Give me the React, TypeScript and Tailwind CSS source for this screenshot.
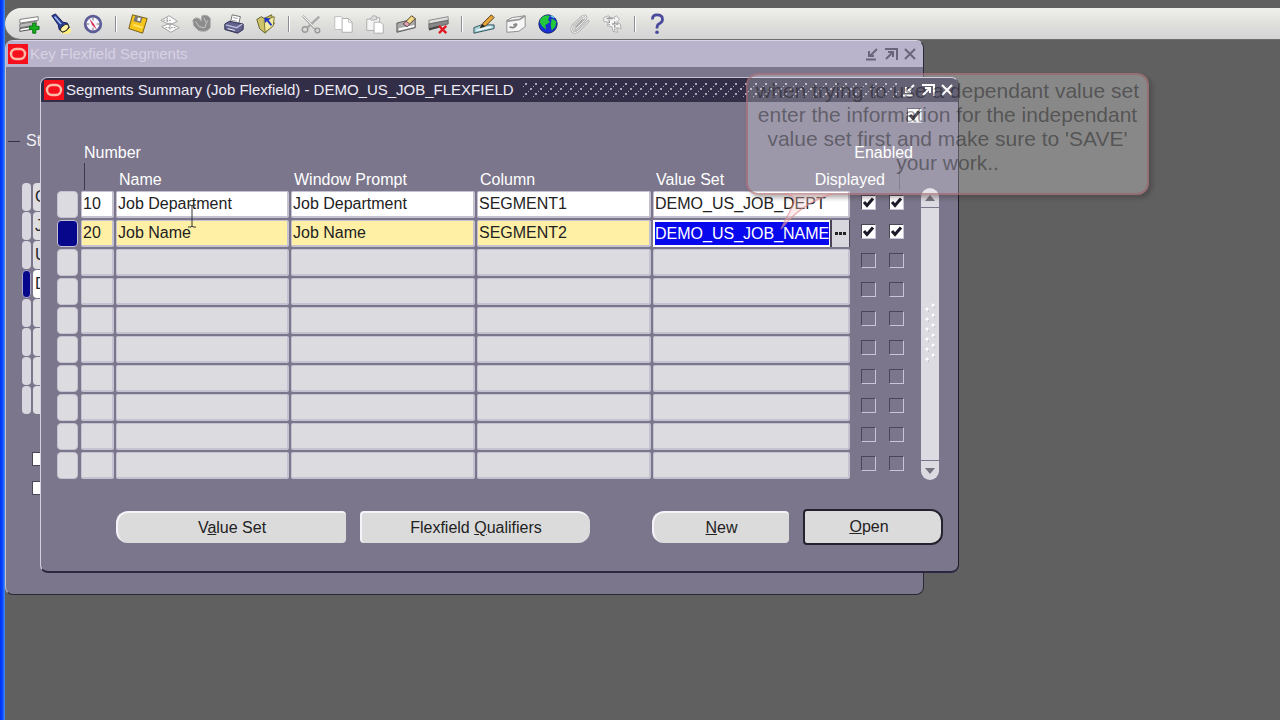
import React, { useState } from 'react';

interface Segment {
  number: string;
  name: string;
  prompt: string;
  column: string;
  valueSet: string;
  displayed: boolean;
  enabled: boolean;
}

const emptySegment: Segment = {
  number: '', name: '', prompt: '', column: '', valueSet: '', displayed: false, enabled: false
};

const initialSegments: Segment[] = [
  { number: '10', name: 'Job Department', prompt: 'Job Department', column: 'SEGMENT1', valueSet: 'DEMO_US_JOB_DEPT', displayed: true, enabled: true },
  { number: '20', name: 'Job Name', prompt: 'Job Name', column: 'SEGMENT2', valueSet: 'DEMO_US_JOB_NAME', displayed: true, enabled: true },
  ...Array.from({ length: 8 }, () => ({ ...emptySegment }))
];

const structures = ['C', 'J', 'U', 'D', '', '', '', ''];

// toolbar drawings, all on a 24 x 24 grid
const icons: Record<string, React.ReactNode> = {
  New: (
    <>
      <path d="M2 7 L22 4 V8 L2 11Z" fill="#fff" stroke="#777" />
      <path d="M2 12 L20 9 V13 L2 16Z" fill="#bbb" stroke="#777" />
      <path d="M2 17 L14 15 V18 L2 20Z" fill="#fff" stroke="#444" />
      <path d="M16 11 h3.5 v3.5 H23 v3.5 h-3.5 V22 H16 v-4 h-3.500 v-3.500 H16Z" fill="#16b01c" stroke="#087010" />
    </>
  ),
  Find: (
    <>
      <ellipse cx="17" cy="19" rx="6" ry="4" fill="#fff07a" />
      <path d="M2 3 L6 1 L14 10 L19 11 L21 16 L14 21 L10 18 L9 13Z" fill="#2a3f96" stroke="#101a50" />
      <path d="M5 4 L12 12" stroke="#9ab4f0" strokeWidth="2" />
      <ellipse cx="16" cy="16.500" rx="5" ry="3" transform="rotate(-38 16 16.500)" fill="#fff2a0" stroke="#222" />
    </>
  ),
  'Show Navigator': (
    <>
      <circle cx="12" cy="12" r="8.500" fill="#f4f4ff" stroke="#5c5c96" strokeWidth="3" />
      <path d="M12 5 V8 M12 16 V19 M5 12 H8 M16 12 H19" stroke="#666" />
      <path d="M8 6 L13 12 L16 18 L11 13Z" fill="#d83048" />
    </>
  ),
  Save: (
    <>
      <path d="M6 2 L22 6 L17 22 L2 17Z" fill="#f6c51a" stroke="#6b5510" />
      <path d="M9 3 L17 5 L15 11 L7 9Z" fill="#777" />
      <path d="M12 5 L15 5.500 L14 9 L11 8Z" fill="#fff" />
      <path d="M7 13 L17 16" stroke="#ffe56a" strokeWidth="2" />
    </>
  ),
  'Next Step': (
    <>
      <path d="M2 8 L11 3 L20 9 L12 13Z M3 15 L12 11 L22 16 L13 21Z" fill="#fff" stroke="#999" />
      <path d="M5 8 H13 M9 5 V11 M7 16 H18 M12 13 V19" stroke="#aaa" strokeWidth="1.500" strokeDasharray="2 1" />
    </>
  ),
  'Switch Responsibility': (
    <>
      <path d="M2 8 Q4 4 9 6 L11 9 L12 3 Q18 1 21 6 V16 Q17 22 8 19 L3 14Z" fill="#8c8c8c" stroke="#aaa" />
      <path d="M5 9 L9 15 L15 16 L18 8 M14 5 L16 10" stroke="#ccc" fill="none" />
    </>
  ),
  Print: (
    <>
      <path d="M8 11 L10 2 L19 4 L17 12Z" fill="#fff" stroke="#666" />
      <path d="M11 5 L16 6 M10 8 L15 9" stroke="#999" />
      <path d="M2 12 L7 9 L22 12 V18 L16 22 L2 18Z" fill="#62628f" stroke="#25254a" />
      <path d="M3 13 L15 16 L21 12" stroke="#bcbcdd" fill="none" strokeWidth="1.500" />
      <path d="M5 17 L13 19" stroke="#fff" />
    </>
  ),
  'Close Form': (
    <>
      <path d="M2 7 L7 4 L10 6 L18 2 L21 12 L11 22 L5 17Z" fill="#cfc46a" stroke="#5c5620" />
      <path d="M10 8 L21 4 L20 14 L11 21Z" fill="#f3eba0" stroke="#77702a" />
      <path d="M10 5 L17 6 L15 8 L19 13 L17 14 L13 9 L11 11Z" fill="#2338c8" />
    </>
  ),
  Cut: (
    <>
      <path d="M3 3 L17 18 M21 4 L8 16" stroke="#aaa" strokeWidth="2.500" />
      <path d="M3 3 L16 16" stroke="#fff" />
      <circle cx="5.500" cy="18" r="3" fill="none" stroke="#999" strokeWidth="1.500" />
      <circle cx="19" cy="19" r="2.500" fill="none" stroke="#999" strokeWidth="1.500" />
    </>
  ),
  Copy: (
    <>
      <path d="M3 4 H10 L13 7 V18 H3Z" fill="#fff" stroke="#bbb" />
      <path d="M11 6 H18 L22 10 V21 H11Z" fill="#fff" stroke="#aaa" />
      <path d="M18 6 V10 H22" fill="none" stroke="#bbb" />
    </>
  ),
  Paste: (
    <>
      <path d="M3 7 L17 5 V19 H3Z" fill="#f4f4f4" stroke="#aaa" />
      <path d="M7 7 Q9 1 14 4 V7 L8 8Z" fill="#ddd" stroke="#aaa" />
      <path d="M11 10 H18 L21 13 V22 H11Z" fill="#fff" stroke="#aaa" />
    </>
  ),
  'Clear Record': (
    <>
      <path d="M1 11 L21 6 V16 L1 21Z" fill="#aaa" stroke="#555" />
      <path d="M3 18 L20 14" stroke="#fff" strokeWidth="2" />
      <path d="M8 12 L17 3 L21 6 L12 15Z" fill="#f3d98a" stroke="#443a20" />
      <path d="M8 12 L11 9 L15 12 L12 15Z" fill="#e6a0b8" stroke="#5a4a55" />
    </>
  ),
  'Delete Record': (
    <>
      <path d="M1 8 L22 4 V8 L1 12Z" fill="#ddd" stroke="#888" />
      <path d="M1 12 L22 8 V12 L1 17Z" fill="#888" stroke="#666" />
      <path d="M1 18 L12 15" stroke="#444" strokeWidth="2" />
      <path d="M12 14 L20 22 M20 14 L12 22" stroke="#e01824" strokeWidth="2.500" />
    </>
  ),
  'Edit Field': (
    <>
      <path d="M1 16 L9 13 H23 V17 L1 22Z" fill="#a8d4dc" stroke="#2b4a55" />
      <path d="M4 19 L20 15" stroke="#fff" strokeWidth="1.500" />
      <path d="M8 16 L11 11 L20 2 L23 5 L14 14Z" fill="#e6a63a" stroke="#4a3010" />
      <path d="M8 16 L10.500 12 L13 14.500Z" fill="#222" />
    </>
  ),
  Zoom: (
    <>
      <path d="M2 8 L8 5 L22 3 V15 L15 20 L2 21Z" fill="#f6f6f6" stroke="#888" />
      <path d="M2 9 L16 7 L22 3" fill="none" stroke="#999" strokeWidth="2" />
      <path d="M5 15 Q10 18 13 12 M13 12 L9 13" fill="none" stroke="#888" strokeWidth="2" />
    </>
  ),
  Translations: (
    <>
      <circle cx="12" cy="12" r="10" fill="#1c2fd0" stroke="#10206e" />
      <path d="M4 6 Q9 1 14 3 L12 7 L14 10 L9 13 L10 18 L6 15 L3 10Z" fill="#22c93a" />
      <path d="M16 6 L21 9 L20 15 L16 19 L15 13Z" fill="#22c93a" />
      <path d="M15 3 L19 5" stroke="#7de8f0" strokeWidth="1.500" />
    </>
  ),
  Attachments: (
    <>
      <path d="M7 18 L18 7 Q20 4 17 3 L14 4 L4 14 Q1 19 5 21 Q8 22 11 19 L21 9 M8 15 L15 8" fill="none" stroke="#aaa" strokeWidth="2.500" strokeLinecap="round" />
      <path d="M7 18 L18 7 Q20 4 17 3 L14 4 L4 14 Q1 19 5 21 Q8 22 11 19 L21 9" fill="none" stroke="#fff" />
    </>
  ),
  'Folder Tools': (
    <>
      <path d="M3 5 L8 3 L12 6 L17 3 L20 7 L17 10 L21 12 L22 17 L17 16 L18 21 L13 20 L12 15 L7 14 L8 10 L3 9Z" fill="#f5f5f5" stroke="#aaa" />
      <path d="M6 6 H15 M9 4 V13 M12 12 H20 M15 9 V19" stroke="#999" strokeWidth="1.500" strokeDasharray="3 1" />
    </>
  ),
  Help: (
    <>
      <path d="M7 7 Q7 2 12 2 Q18 2 18 7 Q18 10 14 12 Q12 13 12 17" fill="none" stroke="#4a4a9c" strokeWidth="3" />
      <circle cx="12" cy="21" r="2" fill="#4a4a9c" />
    </>
  )
};

const toolGroups = [
  ['New', 'Find', 'Show Navigator'],
  ['Save', 'Next Step', 'Switch Responsibility', 'Print', 'Close Form'],
  ['Cut', 'Copy', 'Paste', 'Clear Record', 'Delete Record'],
  ['Edit Field', 'Zoom', 'Translations', 'Attachments', 'Folder Tools'],
  ['Help']
];

const Toolbar: React.FC = () => (
  <header className="flex h-8 items-center rounded-l-2xl border-b border-[#6e6e70] bg-gradient-to-b from-[#f0f0ec] via-[#dfdfdc] to-[#d4d4d6] pl-2">
    {toolGroups.map((group, index) => (
      <React.Fragment key={index}>
        {index > 0 && (
          <span className="flex w-[13px] justify-center">
            <span className="h-4 w-[2px] border-l border-[#8c8c94] bg-white" />
          </span>
        )}
        {group.map(name => (
          <button key={name} type="button" aria-label={name} className="flex w-8 justify-center">
            <svg viewBox="0 0 24 24" className="h-[22px] w-[22px]" fill="none">{icons[name]}</svg>
          </button>
        ))}
      </React.Fragment>
    ))}
  </header>
);

const OracleLogo: React.FC = () => (
  <svg viewBox="0 0 20 20" className="h-5 w-5 shrink-0">
    <rect width="20" height="20" fill="#f5101c" />
    <rect x="3" y="5" width="14" height="10" rx="5" fill="none" stroke="#ffb9a8" strokeWidth="2.500" />
  </svg>
);

const WindowControls: React.FC = () => (
  <div className="flex">
    <button type="button" aria-label="Minimize" className="flex w-[19px] justify-center">
      <svg viewBox="0 0 14 14" className="h-3.5 w-3.5" fill="none" stroke="currentColor" strokeWidth="2">
        <path d="M12 2 L5 9 M4 4 V9 H9 M1 12.500 H11" />
      </svg>
    </button>
    <button type="button" aria-label="Maximize" className="flex w-[19px] justify-center">
      <svg viewBox="0 0 14 14" className="h-3.5 w-3.5" fill="none" stroke="currentColor" strokeWidth="2">
        <path d="M2 12 L8 6 M4 5 H9 V10 M1 2 H13 V13" />
      </svg>
    </button>
    <button type="button" aria-label="Close" className="flex w-[19px] justify-center">
      <svg viewBox="0 0 14 14" className="h-3.5 w-3.5" fill="none" stroke="currentColor" strokeWidth="2">
        <path d="M2 2 L12 12 M12 2 L2 12" />
      </svg>
    </button>
  </div>
);

interface CheckBoxProps {
  label: string;
  checked: boolean;
  onChange: (checked: boolean) => void;
}

const CheckBox: React.FC<CheckBoxProps> = ({ label, checked, onChange }) => (
  <span className="grid h-[15px] w-[15px]">
    <input
      type="checkbox"
      aria-label={label}
      checked={checked}
      onChange={e => onChange(e.target.checked)}
      className="col-start-1 row-start-1 h-[15px] w-[15px] appearance-none border border-t-[#4a4658] border-r-[#c9c5d6] border-b-[#c9c5d6] border-l-[#4a4658] bg-[#7b768c] checked:bg-white"
    />
    {checked && (
      <svg viewBox="0 0 15 15" className="pointer-events-none col-start-1 row-start-1 h-[15px] w-[15px]">
        <path d="M3 7 L6 10.500 L12 3.500" fill="none" stroke="#1c1a28" strokeWidth="3" />
      </svg>
    )}
  </span>
);

const BackWindow: React.FC = () => (
  <section className="absolute left-0 top-0 h-[555px] w-[919px] overflow-hidden rounded-lg border border-t-[#d8d4e4] border-r-[#2b2838] border-b-[#2b2838] border-l-[#c4c0d2] bg-[#7b768c]">
    <div className="flex h-[26px] items-center justify-between bg-[#bab3cc] pl-0.5 pr-1 text-[#6a6578]">
      <div className="flex items-center gap-0.5">
        <OracleLogo />
        <h2 className="text-[15px] leading-5 text-[#d6d2e2]">Key Flexfield Segments</h2>
      </div>
      <WindowControls />
    </div>
    <div className="flex items-center gap-1.5 pl-0.5 pt-16">
      <span className="h-px w-3 bg-[#35313f]" />
      <h3 className="text-base leading-5 text-[#f1eff6]">St</h3>
    </div>
    <div className="flex w-20 flex-col gap-px pl-4 pt-8">
      {structures.map((name, index) => (
        <div key={index} className="flex h-7 gap-[2px]">
          <span className={index === 3 ? 'w-[9px] rounded-sm border border-[#aaa6c8] bg-[#07078c]' : 'w-[9px] rounded-sm bg-[#d8d7df]'} />
          <input aria-label={`Structure ${index + 1}`} defaultValue={name} className={index === 3 ? 'w-10 rounded-sm bg-white pl-[2px] text-base text-[#222]' : 'w-10 rounded-sm bg-[#dedde2] pl-[2px] text-base text-[#222]'} />
        </div>
      ))}
    </div>
    <div className="flex flex-col gap-[15px] pl-[26px] pt-[38px]">
      <input type="checkbox" aria-label="Freeze Flexfield Definition" className="h-3.5 w-3.5 appearance-none border border-[#4a4658] bg-white" />
      <input type="checkbox" aria-label="Enabled" className="h-3.5 w-3.5 appearance-none border border-[#4a4658] bg-white" />
    </div>
  </section>
);

const ScrollBar: React.FC = () => (
  <div className="flex w-[18px] flex-col justify-between rounded-full bg-[#dddbe2]">
    <button type="button" aria-label="Scroll up" className="flex h-5 items-center justify-center border-b border-[#7b768c]">
      <svg viewBox="0 0 10 6" className="h-1.5 w-2.5"><path d="M5 0 L10 6 H0Z" fill="#77737f" /></svg>
    </button>
    <svg viewBox="0 0 18 66" className="h-[66px] w-[18px]">
      {Array.from({ length: 6 }, (_, i) => (
        <g key={i}>
          <circle cx="12" cy={4 + i * 10} r="1.500" fill="#fff" />
          <circle cx="6" cy={i * 10 + 8} r="1.500" fill="#fff" />
          <path d={`M13 ${6 + i * 10} h1 M7 ${10 + i * 10} h1`} stroke="#aaa6b4" />
        </g>
      ))}
    </svg>
    <button type="button" aria-label="Scroll down" className="flex h-5 items-center justify-center border-t border-[#7b768c]">
      <svg viewBox="0 0 10 6" className="h-1.5 w-2.5"><path d="M0 0 H10 L5 6Z" fill="#77737f" /></svg>
    </button>
  </div>
);

const textColumns: { key: 'number' | 'name' | 'prompt' | 'column'; label: string }[] = [
  { key: 'number', label: 'Number' },
  { key: 'name', label: 'Name' },
  { key: 'prompt', label: 'Window Prompt' },
  { key: 'column', label: 'Column' }
];

const SegmentsWindow: React.FC = () => {
  const [segments, setSegments] = useState<Segment[]>(initialSegments);
  const [current, setCurrent] = useState(1);
  const [folder, setFolder] = useState(true);

  const update = (index: number, changes: Partial<Segment>) => {
    setSegments(prev => prev.map((segment, i) => (i === index ? { ...segment, ...changes } : segment)));
  };

  const fieldColor = (index: number) => {
    if (index === current) return 'bg-[#fff0a6]';
    return segments[index].number ? 'bg-white' : 'bg-[#dcdbdf]';
  };

  return (
    <section className="absolute left-[35px] top-[37px] h-[496px] w-[919px] overflow-hidden rounded-lg border border-t-[#c4c0d2] border-r-[#1d1a2b] border-b-2 border-b-[#2b2740] border-l-[#d4d0e0] bg-[#7b768c]">
      <div className="flex h-6 items-center bg-[#332e48] pl-[3px] pr-[2px] text-white">
        <OracleLogo />
        <h1 className="ml-0.5 text-[15px] leading-5 text-[#ecebf4]">Segments Summary (Job Flexfield) - DEMO_US_JOB_FLEXFIELD</h1>
        <svg className="ml-2 h-[14px] flex-1">
          <defs>
            <pattern id="titleDots" width="10" height="10" patternUnits="userSpaceOnUse">
              <path d="M3 0h2v2h-2z M1 3h1v1h-1z M8 5h2v2h-2z M6 8h1v1h-1z" fill="#aaa7b8" />
            </pattern>
          </defs>
          <rect width="100%" height="14" fill="url(#titleDots)" />
        </svg>
        <WindowControls />
      </div>

      <div className="flex justify-end pr-9 pt-1.5">
        <CheckBox label="Folder" checked={folder} onChange={setFolder} />
      </div>

      <div className="flex items-end gap-2 pl-[15px] pt-5">
        <table className="w-[857px] table-fixed border-collapse text-base text-[#222]">
          <colgroup>
            <col className="w-6" />
            <col className="w-[35px]" />
            <col className="w-[175px]" />
            <col className="w-[186px]" />
            <col className="w-[176px]" />
            <col className="w-[199px]" />
            <col className="w-[34px]" />
            <col className="w-7" />
          </colgroup>
          <thead className="text-left leading-5 text-white">
            <tr className="h-[27px] align-top">
              <td rowSpan={2} />
              <th rowSpan={2} className="whitespace-nowrap p-0 pl-1 font-normal">
                Number
                <span className="block h-[27px] border-l border-[#3c384a]" />
              </th>
              <td colSpan={4} />
              <td />
              <th rowSpan={2} className="p-0 font-normal">
                <div className="flex justify-end">Enabled</div>
                <span className="ml-3.5 block h-[27px] border-l border-[#5c586a]" />
              </th>
            </tr>
            <tr className="h-5 align-top">
              <th className="p-0 pl-1 font-normal">Name</th>
              <th className="p-0 pl-1 font-normal">Window Prompt</th>
              <th className="p-0 pl-1 font-normal">Column</th>
              <th className="p-0 pl-1 font-normal">Value Set</th>
              <th className="p-0 font-normal"><div className="flex justify-end">Displayed</div></th>
            </tr>
          </thead>
          <tbody>
            {segments.map((segment, index) => (
              <tr key={index} className="h-[29px]">
                <td className="p-px">
                  <button
                    type="button"
                    aria-label={`Select row ${index + 1}`}
                    onClick={() => setCurrent(index)}
                    className={`block h-[27px] w-[21px] rounded-sm border border-[#c4c1d0] ${index === current ? 'bg-[#07078c]' : 'bg-[#dcdbdf]'}`}
                  />
                </td>
                {textColumns.map(({ key, label }) => (
                  <td key={key} className="p-px">
                    <input
                      aria-label={label}
                      value={segment[key]}
                      onChange={e => update(index, { [key]: e.target.value })}
                      className={`block h-[27px] w-full rounded-xs border border-b-2 border-r-2 border-[#c4c1d0] pl-px ${fieldColor(index)}`}
                    />
                  </td>
                ))}
                <td className="p-px">
                  {index === current ? (
                    <div className="flex h-[27px] w-[197px] gap-[2px] bg-[#4a4658] pr-px">
                      <input
                        aria-label="Value Set"
                        value={segment.valueSet}
                        onChange={e => update(index, { valueSet: e.target.value })}
                        className="w-[177px] border-2 border-r border-white bg-[#0808ee] text-white"
                      />
                      <button type="button" aria-label="List of values" className="flex flex-1 items-center justify-center gap-px bg-[#d8d7dd]">
                        <span className="h-[3px] w-[3px] bg-[#222]" />
                        <span className="h-[3px] w-[3px] bg-[#222]" />
                        <span className="h-[3px] w-[3px] bg-[#222]" />
                      </button>
                    </div>
                  ) : (
                    <input
                      aria-label="Value Set"
                      value={segment.valueSet}
                      onChange={e => update(index, { valueSet: e.target.value })}
                      className={`block h-[27px] w-[197px] rounded-xs border border-b-2 border-r-2 border-[#c4c1d0] pl-px ${fieldColor(index)}`}
                    />
                  )}
                </td>
                <td className="p-0 pb-1 pl-2.5">
                  <CheckBox label="Displayed" checked={segment.displayed} onChange={displayed => update(index, { displayed })} />
                </td>
                <td className="p-0 pb-1 pl-1">
                  <CheckBox label="Enabled" checked={segment.enabled} onChange={enabled => update(index, { enabled })} />
                </td>
              </tr>
            ))}
          </tbody>
        </table>
        <div className="flex h-[292px]">
          <ScrollBar />
        </div>
      </div>

      <div className="flex items-center pl-[75px] pr-[15px] pt-[29px] text-base text-[#222]">
        <button type="button" className="h-8 w-[230px] rounded-l-xl rounded-r-sm border-l-2 border-t-2 border-[#f4f3f8] bg-[#dcdbdc]">
          V<u>a</u>lue Set
        </button>
        <button type="button" className="ml-3.5 h-8 w-[230px] rounded-l-sm rounded-r-xl border-l-2 border-t-2 border-[#f4f3f8] bg-[#dcdbdc]">
          Flexfield <u>Q</u>ualifiers
        </button>
        <button type="button" className="ml-auto h-8 w-[137px] rounded-l-xl rounded-r-sm border-l-2 border-t-2 border-[#f4f3f8] bg-[#dcdbdc]">
          <u>N</u>ew
        </button>
        <button type="button" className="ml-3.5 h-9 w-[140px] rounded-l-sm rounded-r-xl border-2 border-[#25222f] bg-[#dcdbdc] pr-2">
          <u>O</u>pen
        </button>
      </div>
    </section>
  );
};

// fading annotation balloon, laid over both windows
const Callout: React.FC = () => (
  <aside className="pointer-events-none absolute left-[741px] top-[33px] h-[122px] w-[403px] rounded-xl border-2 border-[#a05f66]/60 bg-white/25 px-1 pt-1 text-center text-[21px] leading-6 text-black/40 shadow-[3px_3px_4px_rgba(50,40,40,0.35)]">
    <p>when trying to use a dependant value set enter the information for the independant value set first and make sure to 'SAVE' your work..</p>
    <svg viewBox="0 0 80 38" className="absolute left-4 top-[118px] h-[38px] w-20">
      <path d="M20 1 Q32 2 30 10 L17 36 Q38 10 68 1" fill="#f0c8c8" fillOpacity="0.35" stroke="#e08a90" strokeOpacity="0.6" strokeWidth="1.500" />
    </svg>
  </aside>
);

const App: React.FC = () => {
  return (
    <div className="flex min-h-screen bg-[#606060] font-['Liberation_Sans',Arial,sans-serif]">
      <div className="w-[5px] shrink-0 bg-gradient-to-r from-[#0030f0] via-[#0a48ff] to-[#4a8cf0]" />
      <div className="flex min-w-0 flex-1 flex-col pt-2">
        <Toolbar />
        <main className="relative min-h-[600px] flex-1 overflow-hidden">
          <BackWindow />
          <SegmentsWindow />
          <Callout />
          <svg viewBox="0 0 10 24" className="pointer-events-none absolute left-[182px] top-[164px] h-6 w-2.5">
            <path d="M1 1 H4 L5 2 L6 1 H9 M5 2 V22 M1 23 H4 L5 22 L6 23 H9" fill="none" stroke="#333" />
          </svg>
        </main>
      </div>
    </div>
  );
};

export default App;
